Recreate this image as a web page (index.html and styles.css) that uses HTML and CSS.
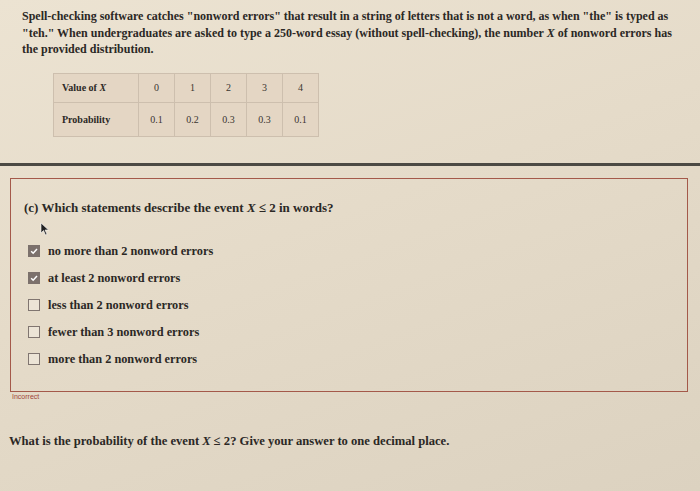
FILE: index.html
```html
<!DOCTYPE html>
<html>
<head>
<meta charset="utf-8">
<link rel="stylesheet" href="styles.css">
</head>
<body>
<div class="page">
  <p class="intro">Spell-checking software catches "nonword errors" that result in a string of letters that is not a word, as when "the" is typed as "teh." When undergraduates are asked to type a 250-word essay (without spell-checking), the number <i>X</i> of nonword errors has the provided distribution.</p>
  <table class="dist">
    <tr><th>Value of <i>X</i></th><td>0</td><td>1</td><td>2</td><td>3</td><td>4</td></tr>
    <tr><th>Probability</th><td>0.1</td><td>0.2</td><td>0.3</td><td>0.3</td><td>0.1</td></tr>
  </table>
  <div class="rule"></div>
  <div class="box">
    <p class="question">(c) Which statements describe the event <i>X</i> ≤ 2 in words?</p>
    <svg class="cursor" width="10" height="14" viewBox="0 0 10 14"><path d="M1 1 L1 11 L3.5 8.5 L5.5 13 L7 12.3 L5 8 L8.5 8 Z" fill="#222" stroke="#fff" stroke-width="0.6"/></svg>
    <ul class="options">
      <li><span class="cb checked"><svg viewBox="0 0 12 12" width="12" height="12"><path d="M2.6 6.2 L5 8.6 L9.6 3.6" fill="none" stroke="#fff" stroke-width="1.8"/></svg></span>no more than 2 nonword errors</li>
      <li><span class="cb checked"><svg viewBox="0 0 12 12" width="12" height="12"><path d="M2.6 6.2 L5 8.6 L9.6 3.6" fill="none" stroke="#fff" stroke-width="1.8"/></svg></span>at least 2 nonword errors</li>
      <li><span class="cb"></span>less than 2 nonword errors</li>
      <li><span class="cb"></span>fewer than 3 nonword errors</li>
      <li><span class="cb"></span>more than 2 nonword errors</li>
    </ul>
  </div>
  <div class="incorrect">Incorrect</div>
  <p class="question2">What is the probability of the event <i>X</i> ≤ 2? Give your answer to one decimal place.</p>
</div>
</body>
</html>
```
FILE: styles.css
```css
html, body {
  margin: 0;
  padding: 0;
}
body {
  background: #e4dac8;
  font-family: "Liberation Serif", "Times New Roman", serif;
  color: #2b2825;
  width: 700px;
  height: 491px;
  overflow: hidden;
}
.page {
  background: linear-gradient(160deg, #ece3d2 0%, #e5dbc9 45%, #dcd2c0 100%);
  height: 491px;
  padding-top: 8px;
  box-sizing: border-box;
}
.intro {
  margin: 0 20px 0 22px;
  font-size: 12px;
  font-weight: bold;
  line-height: 16.5px;
}
.dist {
  margin: 15px 0 0 53px;
  border-collapse: collapse;
  background: #e4d6c4;
  font-size: 10px;
  font-weight: bold;
}
.dist th, .dist td {
  border: 1px solid #cdbfae;
  text-align: center;
}
.dist th {
  width: 85px;
  text-align: left;
  padding-left: 8px;
  box-sizing: border-box;
}
.dist td {
  width: 35px;
  padding: 0;
  font-weight: normal;
  color: #3a3530;
}
.dist tr:first-child th, .dist tr:first-child td {
  height: 28px;
}
.dist tr:last-child th, .dist tr:last-child td {
  height: 33px;
}
.rule {
  margin-top: 26px;
  height: 3px;
  background: #4c4a44;
}
.box {
  position: relative;
  margin: 12px 12px 0 10px;
  height: 214px;
  border: 1.5px solid #a4594a;
  box-sizing: border-box;
}
.question {
  margin: 21px 0 0 13px;
  font-size: 13px;
  font-weight: bold;
}
.cursor {
  position: absolute;
  left: 29px;
  top: 43px;
}
.options {
  list-style: none;
  margin: 22px 0 0 17px;
  padding: 0;
}
.options li {
  display: flex;
  align-items: center;
  height: 27px;
  font-size: 12.3px;
  font-weight: bold;
}
.cb {
  width: 12px;
  height: 12px;
  border: 1px solid #807570;
  box-sizing: border-box;
  margin-right: 8px;
  display: inline-flex;
  align-items: center;
  justify-content: center;
  background: #ece4d6;
}
.cb.checked {
  background: #7c716c;
  border-color: #7c716c;
}
.cb svg {
  display: block;
}
.incorrect {
  margin: 1px 0 0 12px;
  font-size: 7px;
  color: #a0463a;
  font-family: "Liberation Sans", Arial, sans-serif;
}
.question2 {
  margin: 34px 0 0 9px;
  font-size: 12.6px;
  font-weight: bold;
}
```
